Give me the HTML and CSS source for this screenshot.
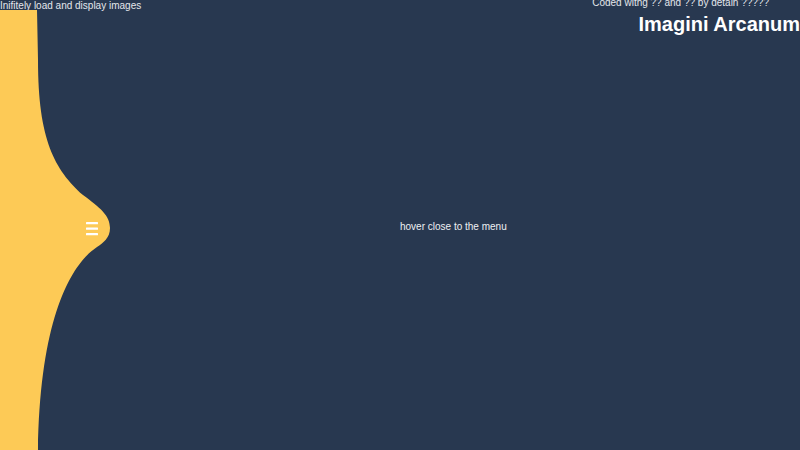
FILE: index.html
```html
<!DOCTYPE html>
<html>
<head>
<meta charset="utf-8">
<link rel="stylesheet" href="styles.css">
</head>
<body>
<div class="page">
  <header class="top">
    <div class="intro">Inifitely load and display images</div>
    <div class="brand">
      <div class="credit">Coded withg ?? and ?? by detain ?????</div>
      <h1 class="title">Imagini Arcanum</h1>
    </div>
  </header>
  <nav class="menu">
    <svg class="blob" width="120" height="450" viewBox="0 0 120 450">
      <path d="M0 10 L37 10 L38 60 C38 140 55 170 83 195 C100 208 110 215 110 228 C110 238 103 243 97 247 C70 265 40 320 38 450 L0 450 Z" fill="#fdca56"/>
      <g fill="#ffffff">
        <rect x="86" y="222" width="12" height="2.2" rx="0.5"/>
        <rect x="86" y="227.5" width="12" height="2.2" rx="0.5"/>
        <rect x="86" y="233" width="12" height="2.2" rx="0.5"/>
      </g>
    </svg>
  </nav>
  <main class="stage">
    <p class="hint">hover close to the menu</p>
  </main>
</div>
</body>
</html>
```

FILE: styles.css
```css
html, body {
  margin: 0;
  padding: 0;
  height: 100%;
}
body {
  background: #283850;
  color: #eef0f3;
  font-family: "Liberation Sans", Arial, sans-serif;
  overflow: hidden;
}
.page {
  position: relative;
  width: 800px;
  height: 450px;
}
.top {
  display: flex;
  justify-content: space-between;
  align-items: flex-start;
}
.intro {
  font-size: 10px;
  line-height: 12px;
  color: #e4e7ec;
}
.brand {
  display: flex;
  flex-direction: column;
  align-items: flex-end;
}
.credit {
  font-size: 10px;
  line-height: 10px;
  margin-top: -2px;
  margin-right: 31px;
  color: #e4e7ec;
}
.title {
  margin: 4px 0 0 0;
  font-size: 20px;
  line-height: 24px;
  font-weight: bold;
  color: #ffffff;
}
.menu {
  position: absolute;
  left: 0;
  top: 0;
}
.blob {
  display: block;
}
.stage {
  position: absolute;
  inset: 0;
  display: flex;
  align-items: center;
  padding-left: 400px;
  padding-top: 4px;
}
.hint {
  margin: 0;
  font-size: 10px;
  line-height: 14px;
  color: #eef0f3;
}
```
